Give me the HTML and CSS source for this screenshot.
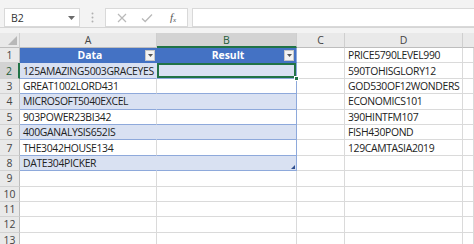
FILE: index.html
```html
<!DOCTYPE html>
<html>
<head>
<meta charset="utf-8">
<link rel="stylesheet" href="styles.css">
</head>
<body>
<div class="bar">
  <div class="namebox"><span>B2</span><svg class="dd" width="7" height="4" viewBox="0 0 7 4"><path d="M0 0h7L3.5 4z" fill="#6a6a6a"/></svg></div>
  <div class="sep"><svg width="3" height="11" viewBox="0 0 3 11"><circle cx="1.5" cy="1.5" r="1" fill="#b0b0b0"/><circle cx="1.5" cy="5.5" r="1" fill="#b0b0b0"/><circle cx="1.5" cy="9.5" r="1" fill="#b0b0b0"/></svg></div>
  <div class="fxbox">
    <svg width="10" height="10" viewBox="0 0 10 10"><path d="M1 1L9 9M9 1L1 9" stroke="#b9b9b9" stroke-width="1.2"/></svg>
    <svg width="12" height="10" viewBox="0 0 12 10"><path d="M1 5.5L4.2 8.5L11 1.5" stroke="#b9b9b9" stroke-width="1.3" fill="none"/></svg>
    <span class="fx">f<sub>x</sub></span>
  </div>
  <div class="formula"></div>
</div>
<div class="gap"></div>
<div class="grid">
  <div class="ch corner"><svg width="9" height="9" viewBox="0 0 9 9"><path d="M9 0V9H0z" fill="#b8b8b8"/></svg></div>
  <div class="ch">A</div><div class="ch sel">B</div><div class="ch">C</div><div class="ch">D</div><div class="ch last"></div>

  <div class="rh">1</div>
  <div class="c th">Data<span class="btn"><svg width="5" height="3" viewBox="0 0 5 3"><path d="M0 0h5L2.5 3z" fill="#555"/></svg></span></div>
  <div class="c th tr">Result<span class="btn"><svg width="5" height="3" viewBox="0 0 5 3"><path d="M0 0h5L2.5 3z" fill="#555"/></svg></span></div>
  <div class="c"></div><div class="c">PRICE5790LEVEL990</div><div class="c"></div>

  <div class="rh rsel">2</div>
  <div class="c tb band">125AMAZING5003GRACEYES</div>
  <div class="c tb band tr active"><span class="handle"></span></div>
  <div class="c"></div><div class="c">590TOHISGLORY12</div><div class="c"></div>

  <div class="rh">3</div>
  <div class="c tb">GREAT1002LORD431</div>
  <div class="c tb tr"></div>
  <div class="c"></div><div class="c">GOD530OF12WONDERS</div><div class="c"></div>

  <div class="rh">4</div>
  <div class="c tb band">MICROSOFT5040EXCEL</div>
  <div class="c tb band tr"></div>
  <div class="c"></div><div class="c">ECONOMICS101</div><div class="c"></div>

  <div class="rh">5</div>
  <div class="c tb">903POWER23BI342</div>
  <div class="c tb tr"></div>
  <div class="c"></div><div class="c">390HINTFM107</div><div class="c"></div>

  <div class="rh">6</div>
  <div class="c tb band">400GANALYSIS652IS</div>
  <div class="c tb band tr"></div>
  <div class="c"></div><div class="c">FISH430POND</div><div class="c"></div>

  <div class="rh">7</div>
  <div class="c tb">THE3042HOUSE134</div>
  <div class="c tb tr"></div>
  <div class="c"></div><div class="c">129CAMTASIA2019</div><div class="c"></div>

  <div class="rh">8</div>
  <div class="c tb band">DATE304PICKER</div>
  <div class="c tb band tr"><svg class="resize" width="4" height="4" viewBox="0 0 4 4"><path d="M4 0V4H0z" fill="#2f4f8f"/></svg></div>
  <div class="c"></div><div class="c"></div><div class="c"></div>

  <div class="rh">9</div><div class="c"></div><div class="c"></div><div class="c"></div><div class="c"></div><div class="c"></div>
  <div class="rh">10</div><div class="c"></div><div class="c"></div><div class="c"></div><div class="c"></div><div class="c"></div>
  <div class="rh">11</div><div class="c"></div><div class="c"></div><div class="c"></div><div class="c"></div><div class="c"></div>
  <div class="rh">12</div><div class="c"></div><div class="c"></div><div class="c"></div><div class="c"></div><div class="c"></div>
  <div class="rh">13</div><div class="c"></div><div class="c"></div><div class="c"></div><div class="c"></div><div class="c"></div>
</div>
</body>
</html>
```
FILE: styles.css
```css
* { box-sizing: border-box; margin: 0; padding: 0; }
html, body { width: 474px; height: 244px; overflow: hidden; }
body { background: #fff; font-family: "Open Sans", "Noto Sans", sans-serif; color: #222; }

.bar {
  height: 27px;
  background: #f3f3f3;
  border-top: 0;
  display: flex;
  align-items: flex-start;
  padding: 8px 0 0 4px;
}
.namebox {
  width: 76px; height: 19px;
  background: #fff;
  border: 1px solid #d9d9d9;
  display: flex; align-items: center; justify-content: space-between;
  padding: 0 4px 0 6px;
  font-size: 10.5px; color: #333;
}
.sep { width: 25px; height: 19px; display: flex; align-items: center; justify-content: center; }
.fxbox {
  width: 83px; height: 19px;
  background: #fff;
  border: 1px solid #d9d9d9;
  display: flex; align-items: center;
  padding-left: 11px; gap: 14px;
}
.fx { font-family: "Liberation Serif", serif; font-style: italic; font-size: 11px; color: #555; margin-left: 3px; }
.fx sub { font-size: 7px; vertical-align: -1px; }
.formula {
  flex: 1; height: 19px; margin-left: 4px;
  background: #fff;
  border: 1px solid #d9d9d9; border-right: 0;
}
.gap { height: 6px; background: #f3f3f3; border-top: 1px solid #d5d5d5; }

.grid {
  display: grid;
  grid-template-columns: 20px 137px 140px 48px 118px 1fr;
  grid-template-rows: 15px repeat(13, 15.4px);
  font-size: 10.4px;
  letter-spacing: -0.35px;
}
.ch {
  background: #e9e9e9;
  border-right: 1px solid #cfcfcf;
  border-bottom: 1px solid #bdbdbd;
  display: flex; align-items: center; justify-content: center;
  color: #444; font-size: 10.5px; letter-spacing: 0;
}
.ch.corner { justify-content: flex-end; align-items: flex-end; padding: 0 2px 2px 0; }
.ch.sel { background: #d3d3d3; border-bottom: 2px solid #217346; color: #1e5c38; }
.ch.last { border-right: 0; }
.rh {
  background: #e9e9e9;
  border-right: 1px solid #bdbdbd;
  border-bottom: 1px solid #d2d2d2;
  display: flex; align-items: center; justify-content: center;
  color: #444; letter-spacing: 0;
}
.rh.rsel { background: #d3d3d3; border-right: 2px solid #217346; color: #1e5c38; }
.c {
  border-right: 1px solid #dadada;
  border-bottom: 1px solid #dadada;
  display: flex; align-items: center;
  padding-left: 3px;
  white-space: nowrap; overflow: hidden;
  position: relative;
}
.c.th {
  background: #4472c4; color: #fff; font-weight: 700;
  justify-content: center;
  border-right: 0; border-bottom: 1px solid #4472c4;
  letter-spacing: 0;
}
.c.tb { border-right: 1px solid #dadada; border-bottom: 1px solid #8ea9db; }
.c.band { background: #d9e1f2; border-right-color: #d9e1f2; }
.c.tr { border-right: 1px solid #8ea9db; }
.btn {
  position: absolute; right: 2px; top: 2px;
  width: 10px; height: 11px;
  background: #f3f3f3; border: 1px solid #c6c6c6;
  display: flex; align-items: center; justify-content: center;
}
.c.active { box-shadow: inset 0 0 0 2px #217346; overflow: visible; }
.handle {
  position: absolute; right: -3px; bottom: -3px;
  width: 5px; height: 5px;
  background: #217346; border: 1px solid #fff;
  z-index: 2;
}
.resize { position: absolute; right: 1px; bottom: 1px; }
```
